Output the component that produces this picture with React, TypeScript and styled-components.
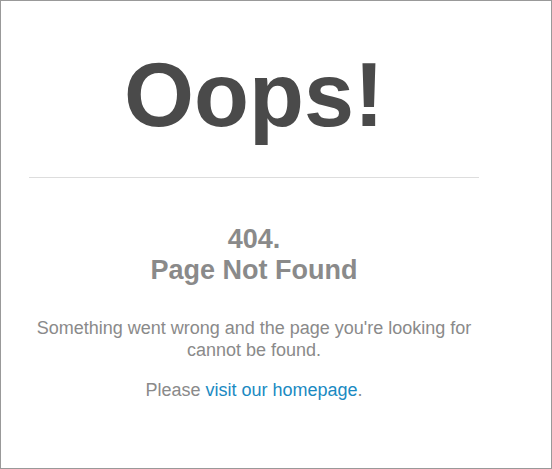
import styled, { createGlobalStyle } from 'styled-components';

const GlobalStyle = createGlobalStyle`
    html, body {
        margin: 0;
        padding: 0;
        background: #ffffff;
    }
    body {
        font-family: 'Liberation Sans', Arial, Helvetica, sans-serif;
    }
`;

const Frame = styled.div`
    box-sizing: border-box;
    width: 552px;
    height: 469px;
    border: 1px solid #999999;
    padding: 49px 0 0 28px;
    background: #ffffff;
`;

const Content = styled.main`
    width: 450px;
    text-align: center;
`;

const Title = styled.h1`
    margin: 0;
    font-size: 90px;
    line-height: 90px;
    font-weight: 700;
    color: #4a4a4a;
`;

const Rule = styled.hr`
    margin: 37px 0 0;
    border: 0;
    border-top: 1px solid #dddddd;
    height: 0;
`;

const Subtitle = styled.h2`
    margin: 46px 0 0;
    font-size: 27px;
    line-height: 31px;
    font-weight: 700;
    color: #8a8a8a;
`;

const Text = styled.p<{ $gap: number }>`
    margin: ${(p) => p.$gap}px 0 0;
    font-size: 18px;
    line-height: 22px;
    color: #8a8a8a;
`;

const Link = styled.a`
    color: #1a8ac2;
    text-decoration: none;
`;

const App = () => {
    return (
        <>
            <GlobalStyle />
            <Frame>
                <Content>
                    <Title>Oops!</Title>
                    <Rule />
                    <Subtitle>
                        404.
                        <br />
                        Page Not Found
                    </Subtitle>
                    <Text $gap={31}>Something went wrong and the page you're looking for cannot be found.</Text>
                    <Text $gap={18}>
                        Please <Link href='#'>visit our homepage</Link>.
                    </Text>
                </Content>
            </Frame>
        </>
    );
};

export default App;
